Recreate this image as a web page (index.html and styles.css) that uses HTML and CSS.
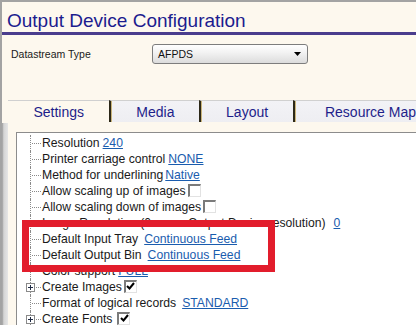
FILE: index.html
```html
<!DOCTYPE html>
<html lang="en">
<head>
    <meta charset="UTF-8">
    <title>Output Device Configuration</title>
    <link rel="stylesheet" href="styles.css">
</head>
<body>
    <div class="window">
        <h1 class="title">Output Device Configuration</h1>

        <div class="form-row">
            <label class="form-label">Datastream Type</label>
            <div class="combo">
                <span>AFPDS</span>
                <svg class="combo-arrow" width="7" height="4" viewBox="0 0 7 4"><path d="M0 0h7L3.5 4z" fill="#000"/></svg>
            </div>
        </div>

        <div class="tabs">
            <div class="tab tab-active">Settings</div>
            <div class="tab tab-media">Media</div>
            <div class="tab tab-layout">Layout</div>
            <div class="tab tab-res">Resource Map</div>
        </div>

        <div class="tab-body">
            <div class="strip"></div>
            <div class="tree">
                <div class="row"><span class="branch"></span>Resolution <a class="link">240</a></div>
                <div class="row"><span class="branch"></span>Printer carriage control <a class="link">NONE</a></div>
                <div class="row"><span class="branch"></span>Method for underlining<a class="link gap-s">Native</a></div>
                <div class="row"><span class="branch"></span>Allow scaling up of images<span class="check"></span></div>
                <div class="row"><span class="branch"></span>Allow scaling down of images<span class="check"></span></div>
                <div class="row"><span class="branch"></span>Image Resolution (0 = use Output Device resolution)<a class="link gap-l">0</a></div>
                <div class="row"><span class="branch"></span>Default Input Tray<a class="link gap-m">Continuous Feed</a></div>
                <div class="row"><span class="branch"></span>Default Output Bin<a class="link gap-m">Continuous Feed</a></div>
                <div class="row"><span class="branch"></span>Color support <a class="link">FULL</a></div>
                <div class="row"><span class="branch expand"><svg class="plus" width="9" height="9" viewBox="0 0 9 9"><rect x="0.5" y="0.5" width="8" height="8" fill="#fff" stroke="#8a8a8a"/><path d="M2 4.5h5M4.5 2v5" stroke="#1f2a44"/></svg></span>Create Images<span class="check checked"><svg width="9" height="9" viewBox="0 0 9 9"><path d="M1 4l2.5 2.5L8 1" fill="none" stroke="#000" stroke-width="2"/></svg></span></div>
                <div class="row"><span class="branch"></span>Format of logical records<a class="link gap-m">STANDARD</a></div>
                <div class="row"><span class="branch expand"><svg class="plus" width="9" height="9" viewBox="0 0 9 9"><rect x="0.5" y="0.5" width="8" height="8" fill="#fff" stroke="#8a8a8a"/><path d="M2 4.5h5M4.5 2v5" stroke="#1f2a44"/></svg></span>Create Fonts<span class="check checked gap-m"><svg width="9" height="9" viewBox="0 0 9 9"><path d="M1 4l2.5 2.5L8 1" fill="none" stroke="#000" stroke-width="2"/></svg></span></div>
            </div>
        </div>

        <div class="highlight"></div>
    </div>
</body>
</html>
```

FILE: styles.css
```css
body {
    margin: 0;
    font-family: "Liberation Sans", Arial, sans-serif;
    background-color: #fdf8ee;
}
.window {
    position: relative;
    height: 323px;
    overflow: hidden;
    border-top: 2px solid #a3a3a3;
    border-left: 2px solid #a3a3a3;
    background-color: #fdf8ee;
}
.title {
    margin: 0;
    height: 22px;
    padding: 8px 0 0 5px;
    line-height: 22px;
    font-size: 19px;
    font-weight: normal;
    color: #1c1c8e;
    border-bottom: 3px solid #4a3d8d;
}
.form-row {
    display: flex;
    align-items: center;
    margin-top: 9px;
    padding-left: 9px;
}
.form-label {
    width: 141px;
    font-size: 10.5px;
    color: #1a1a1a;
}
.combo {
    display: flex;
    align-items: center;
    justify-content: space-between;
    box-sizing: border-box;
    width: 156px;
    height: 20px;
    padding: 0 6px 0 5px;
    font-size: 10.5px;
    color: #111;
    border: 1px solid #7d7d7d;
    border-radius: 3px;
    background: linear-gradient(#ffffff, #f3f3f3 40%, #dcdcdc);
}
.tabs {
    display: flex;
    height: 22px;
    margin-top: 36px;
    padding-left: 6px;
}
.tab {
    box-sizing: border-box;
    height: 22px;
    padding-top: 3px;
    text-align: center;
    font-size: 14px;
    color: #1e1e8a;
    border-top: 1px solid #d0d0d0;
    background: linear-gradient(#f2f2f6, #eeeef2);
}
.tab-active {
    width: 104px;
    background: #fdf8ee;
}
.tab-media,
.tab-layout,
.tab-res {
    border-left: 2px solid #2c2818;
    box-shadow: inset 1px 0 0 #c9b47a;
}
.tab-media {
    width: 92px;
}
.tab-layout {
    width: 96px;
}
.tab-res {
    flex: 1;
    text-align: left;
    padding-left: 30px;
    white-space: nowrap;
}
.tab-body {
    display: flex;
    height: 210px;
    margin-top: 1px;
}
.strip {
    width: 6px;
    background: linear-gradient(90deg, #9a9a9a, #d4d4d4 30%, #e6e6e6);
}
.tree {
    flex: 1;
    margin: 9px 0 0 8px;
    padding-top: 2px;
    background-color: #ffffff;
    border-top: 1px solid #8c8c8c;
    border-left: 1px solid #8c8c8c;
    font-size: 12.2px;
    color: #1a1a1a;
}
.row {
    display: flex;
    align-items: center;
    height: 16px;
    white-space: nowrap;
}
.branch {
    position: relative;
    flex: none;
    width: 25px;
    height: 16px;
}
.branch::before {
    content: "";
    position: absolute;
    left: 13px;
    top: 0;
    height: 16px;
    border-left: 1px dotted #8a8a8a;
}
.branch::after {
    content: "";
    position: absolute;
    left: 15px;
    top: 8px;
    width: 9px;
    border-top: 1px dotted #8a8a8a;
}
.plus {
    position: absolute;
    left: 9px;
    top: 4px;
    z-index: 1;
}
.link {
    margin-left: 3px;
    color: #1a5cae;
    text-decoration: underline;
}
.gap-s {
    margin-left: 2px;
}
.gap-m {
    margin-left: 6px;
}
.gap-l {
    margin-left: 8px;
}
.check {
    display: inline-flex;
    align-items: center;
    justify-content: center;
    box-sizing: border-box;
    width: 13px;
    height: 13px;
    margin: -2px 0 0 2px;
    background-color: #ffffff;
    border-top: 2px solid #7b7b7b;
    border-left: 2px solid #7b7b7b;
    border-bottom: 1px solid #e2e2e2;
    border-right: 1px solid #e2e2e2;
}
.check.gap-m {
    margin-left: 5px;
}
.highlight {
    position: absolute;
    left: 20px;
    top: 218px;
    box-sizing: border-box;
    width: 253px;
    height: 52px;
    border: 7px solid #e21d2c;
}
```
